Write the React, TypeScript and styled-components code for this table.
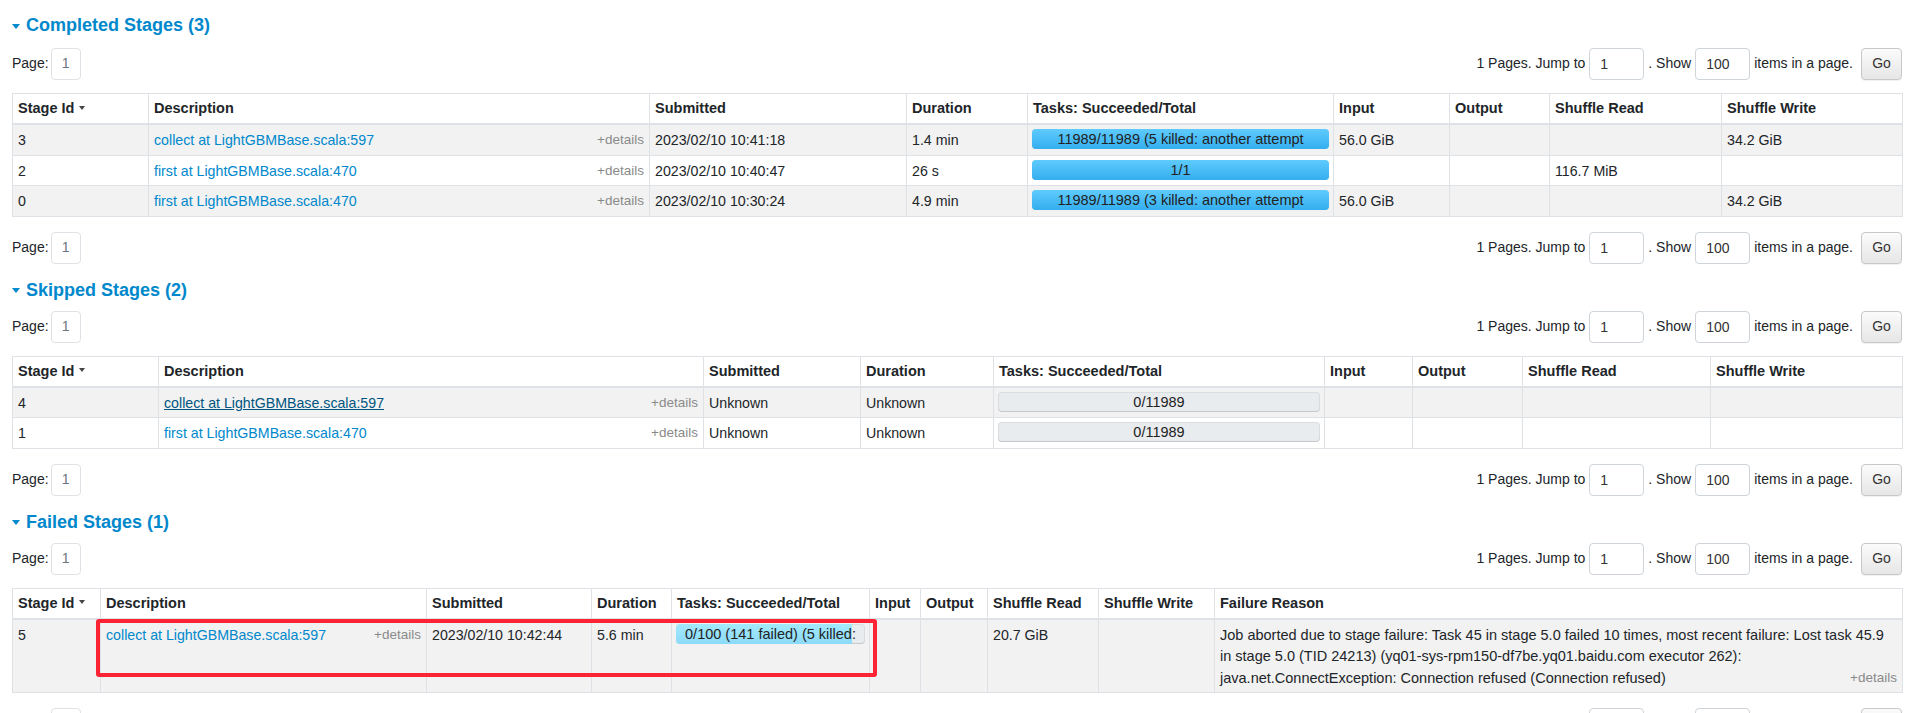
import React from 'react';
import styled, { createGlobalStyle } from 'styled-components';

const GlobalStyle = createGlobalStyle`
  html, body { margin: 0; padding: 0; background: #fff; }
  body {
    font-family: "Liberation Sans", Arial, sans-serif;
    font-size: 14.2px;
    line-height: 21.5px;
    color: #212529;
  }
  * { box-sizing: border-box; }
`;

const PageWrap = styled.div`
  padding: 0 15px 0 12px;
`;

const Section = styled.section``;

const Heading = styled.h4<{ $first?: boolean }>`
  display: flex;
  align-items: center;
  margin: ${(p) => (p.$first ? '14px 0 12px' : '15px 0 10px')};
  font-size: 18px;
  line-height: 22px;
  font-weight: bold;
  color: #0088cc;
  cursor: pointer;
`;

const Arrow = styled.span`
  display: inline-block;
  width: 0;
  height: 0;
  border-left: 4px solid transparent;
  border-right: 4px solid transparent;
  border-top: 5px solid #0088cc;
  margin: 2px 6px 0 0;
`;

const PagingBar = styled.div`
  display: flex;
  justify-content: space-between;
  align-items: center;
  height: 32px;
  font-size: 14px;
`;

const PageLeft = styled.div`
  display: flex;
  align-items: center;
  gap: 2px;
`;

const PageLink = styled.span`
  display: inline-flex;
  align-items: center;
  justify-content: center;
  width: 30px;
  height: 32px;
  border: 1px solid #dee2e6;
  border-radius: 4px;
  color: #6c757d;
`;

const PageForm = styled.div`
  display: flex;
  align-items: center;
  gap: 4px;
`;

const FormText = styled.span`
  white-space: nowrap;
`;

const NumberInput = styled.input`
  width: 55px;
  height: 32px;
  border: 1px solid #ced4da;
  border-radius: 4px;
  padding: 0 10px;
  font: inherit;
  color: #333;
  background: #fff;
  outline: none;
`;

const GoButton = styled.button`
  margin-left: 4px;
  width: 41px;
  height: 32px;
  border: 1px solid #c8c8c8;
  border-radius: 4px;
  background: linear-gradient(#fbfbfb, #e6e6e6);
  box-shadow: 0 1px 1px rgba(0, 0, 0, 0.06);
  font: inherit;
  color: #333;
  padding: 0;
  cursor: pointer;
`;

const TableWrap = styled.div`
  position: relative;
  margin: 13px 0 15px;
`;

const Table = styled.table`
  width: 100%;
  table-layout: fixed;
  border-collapse: collapse;
  border: 1px solid #dee2e6;
`;

const Col = styled.col<{ $w: number }>`
  width: ${(p) => p.$w}px;
`;

const Th = styled.th`
  text-align: left;
  font-weight: bold;
  font-size: 14.5px;
  padding: 4px 5px 3.5px;
  border: 1px solid #dee2e6;
  border-bottom-width: 2px;
  white-space: nowrap;
  overflow: hidden;
  vertical-align: bottom;
  background: #fff;
`;

const SortMark = styled.span`
  display: inline-block;
  width: 0;
  height: 0;
  margin: 0 0 3px 5px;
  border-left: 3px solid transparent;
  border-right: 3px solid transparent;
  border-top: 4px solid #444;
  vertical-align: middle;
`;

const Tr = styled.tr<{ $striped: boolean }>`
  background: ${(p) => (p.$striped ? '#f2f2f2' : '#fff')};
`;

const Td = styled.td<{ $bar?: boolean }>`
  padding: ${(p) => (p.$bar ? '4px 4px 0' : '5px 5px 3px')};
  border: 1px solid #dee2e6;
  vertical-align: top;
  white-space: nowrap;
  overflow: hidden;
`;

const Details = styled.span`
  float: right;
  font-size: 13.5px;
  color: #8a8a8a;
  margin-top: -1px;
  cursor: pointer;
`;

const StageLink = styled.a<{ $hover?: boolean }>`
  color: ${(p) => (p.$hover ? '#005580' : '#0088cc')};
  text-decoration: ${(p) => (p.$hover ? 'underline' : 'none')};
  cursor: pointer;
`;

const Progress = styled.div`
  position: relative;
  height: 20px;
  overflow: hidden;
  border-radius: 4px;
  background: #e9ecef;
  box-shadow: inset 0 0 0 1px rgba(0, 0, 0, 0.06), inset 0 -1px 1px rgba(0, 0, 0, 0.1);
  text-align: center;
  font-size: 14.5px;
  line-height: 20px;
  white-space: normal;
`;

const Fill = styled.div<{ $kind: 'done' | 'running' }>`
  position: absolute;
  top: 0;
  bottom: 0;
  background: ${(p) =>
    p.$kind === 'done'
      ? 'linear-gradient(#5fcbfd, #34aeef)'
      : 'linear-gradient(#a2e9fd, #8cdaf8)'};
`;

const BarLabel = styled.div`
  position: relative;
  color: #222;
`;

const ReasonCell = styled.div`
  white-space: nowrap;
  font-size: 14.5px;
`;

const ReasonLine = styled.div`
  display: flex;
  justify-content: space-between;
`;

const Annotation = styled.div`
  position: absolute;
  top: 31px;
  left: 84px;
  width: 781px;
  height: 58px;
  border: 4px solid #fb2334;
  border-radius: 3px;
  pointer-events: none;
`;

type Task = { label: string; done: number; running: number };
type StageRow = {
  id: string;
  desc: string;
  hover?: boolean;
  submitted: string;
  duration: string;
  task: Task;
  input: string;
  output: string;
  read: string;
  write: string;
  reason?: string[];
};

const baseHeaders = [
  'Stage Id',
  'Description',
  'Submitted',
  'Duration',
  'Tasks: Succeeded/Total',
  'Input',
  'Output',
  'Shuffle Read',
  'Shuffle Write',
];

const completed: StageRow[] = [
  {
    id: '3',
    desc: 'collect at LightGBMBase.scala:597',
    submitted: '2023/02/10 10:41:18',
    duration: '1.4 min',
    task: { label: '11989/11989 (5 killed: another attempt succeeded)', done: 100, running: 0 },
    input: '56.0 GiB',
    output: '',
    read: '',
    write: '34.2 GiB',
  },
  {
    id: '2',
    desc: 'first at LightGBMBase.scala:470',
    submitted: '2023/02/10 10:40:47',
    duration: '26 s',
    task: { label: '1/1', done: 100, running: 0 },
    input: '',
    output: '',
    read: '116.7 MiB',
    write: '',
  },
  {
    id: '0',
    desc: 'first at LightGBMBase.scala:470',
    submitted: '2023/02/10 10:30:24',
    duration: '4.9 min',
    task: { label: '11989/11989 (3 killed: another attempt succeeded)', done: 100, running: 0 },
    input: '56.0 GiB',
    output: '',
    read: '',
    write: '34.2 GiB',
  },
];

const skipped: StageRow[] = [
  {
    id: '4',
    desc: 'collect at LightGBMBase.scala:597',
    hover: true,
    submitted: 'Unknown',
    duration: 'Unknown',
    task: { label: '0/11989', done: 0, running: 0 },
    input: '',
    output: '',
    read: '',
    write: '',
  },
  {
    id: '1',
    desc: 'first at LightGBMBase.scala:470',
    submitted: 'Unknown',
    duration: 'Unknown',
    task: { label: '0/11989', done: 0, running: 0 },
    input: '',
    output: '',
    read: '',
    write: '',
  },
];

const failed: StageRow[] = [
  {
    id: '5',
    desc: 'collect at LightGBMBase.scala:597',
    submitted: '2023/02/10 10:42:44',
    duration: '5.6 min',
    task: { label: '0/100 (141 failed) (5 killed: another attempt succeeded)', done: 0, running: 93 },
    input: '',
    output: '',
    read: '20.7 GiB',
    write: '',
    reason: [
      'Job aborted due to stage failure: Task 45 in stage 5.0 failed 10 times, most recent failure: Lost task 45.9',
      'in stage 5.0 (TID 24213) (yq01-sys-rpm150-df7be.yq01.baidu.com executor 262):',
      'java.net.ConnectException: Connection refused (Connection refused)',
    ],
  },
];

function TaskBar({ task }: { task: Task }) {
  return (
    <Progress>
      {task.done > 0 && <Fill $kind="done" style={{ left: 0, width: `${task.done}%` }} />}
      {task.running > 0 && (
        <Fill $kind="running" style={{ left: `${task.done}%`, width: `${task.running}%` }} />
      )}
      <BarLabel>{task.label}</BarLabel>
    </Progress>
  );
}

function Paging() {
  return (
    <PagingBar>
      <PageLeft>
        <FormText>Page:</FormText>
        <PageLink>1</PageLink>
      </PageLeft>
      <PageForm>
        <FormText>1 Pages. Jump to</FormText>
        <NumberInput defaultValue="1" readOnly />
        <FormText>. Show</FormText>
        <NumberInput defaultValue="100" readOnly />
        <FormText>items in a page.</FormText>
        <GoButton>Go</GoButton>
      </PageForm>
    </PagingBar>
  );
}

function StageTable({
  rows,
  widths,
  withReason,
  annotate,
}: {
  rows: StageRow[];
  widths: number[];
  withReason?: boolean;
  annotate?: boolean;
}) {
  const headers = withReason ? [...baseHeaders, 'Failure Reason'] : baseHeaders;
  return (
    <TableWrap>
      <Table>
        <colgroup>
          {widths.map((w, i) => (
            <Col key={i} $w={w} />
          ))}
        </colgroup>
        <thead>
          <tr>
            {headers.map((h, i) => (
              <Th key={h}>
                {h}
                {i === 0 && <SortMark />}
              </Th>
            ))}
          </tr>
        </thead>
        <tbody>
          {rows.map((r, i) => (
            <Tr key={r.id} $striped={i % 2 === 0}>
              <Td>{r.id}</Td>
              <Td>
                <Details>+details</Details>
                <StageLink $hover={r.hover}>{r.desc}</StageLink>
              </Td>
              <Td>{r.submitted}</Td>
              <Td>{r.duration}</Td>
              <Td $bar>
                <TaskBar task={r.task} />
              </Td>
              <Td>{r.input}</Td>
              <Td>{r.output}</Td>
              <Td>{r.read}</Td>
              <Td>{r.write}</Td>
              {withReason && (
                <Td>
                  <ReasonCell>
                    {(r.reason || []).map((line, li, arr) => (
                      <ReasonLine key={li}>
                        <span>{line}</span>
                        {li === arr.length - 1 && <Details>+details</Details>}
                      </ReasonLine>
                    ))}
                  </ReasonCell>
                </Td>
              )}
            </Tr>
          ))}
        </tbody>
      </Table>
      {annotate && <Annotation />}
    </TableWrap>
  );
}

export default function App() {
  return (
    <>
      <GlobalStyle />
      <PageWrap>
        <Section>
          <Heading $first>
            <Arrow />
            Completed Stages (3)
          </Heading>
          <Paging />
          <StageTable rows={completed} widths={[136, 501, 257, 121, 306, 116, 100, 172, 181]} />
          <Paging />
        </Section>
        <Section>
          <Heading>
            <Arrow />
            Skipped Stages (2)
          </Heading>
          <Paging />
          <StageTable rows={skipped} widths={[146, 545, 157, 133, 331, 88, 110, 188, 192]} />
          <Paging />
        </Section>
        <Section>
          <Heading>
            <Arrow />
            Failed Stages (1)
          </Heading>
          <Paging />
          <StageTable
            rows={failed}
            widths={[88, 326, 165, 80, 198, 51, 67, 111, 116, 688]}
            withReason
            annotate
          />
          <Paging />
        </Section>
      </PageWrap>
    </>
  );
}
